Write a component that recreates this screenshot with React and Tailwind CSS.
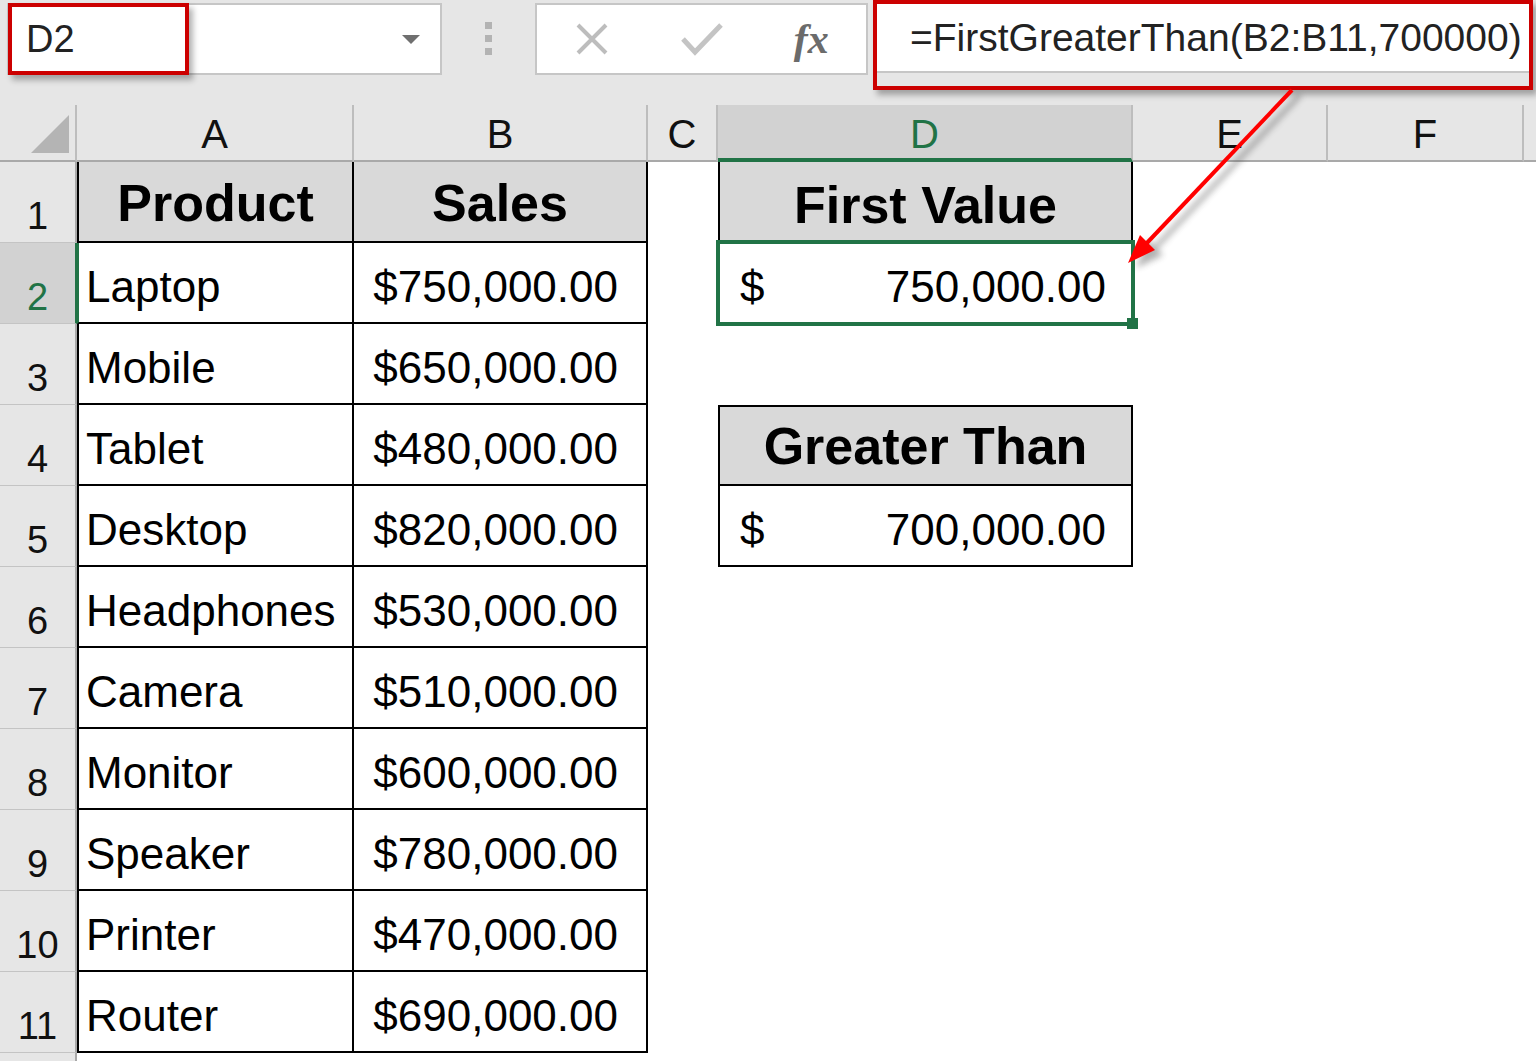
import React from "react";

const COLS = "grid grid-cols-[77px_277px_294px_70px_415px_195px_196px_12px]";

const data = [
  ["Laptop", "$750,000.00"],
  ["Mobile", "$650,000.00"],
  ["Tablet", "$480,000.00"],
  ["Desktop", "$820,000.00"],
  ["Headphones", "$530,000.00"],
  ["Camera", "$510,000.00"],
  ["Monitor", "$600,000.00"],
  ["Speaker", "$780,000.00"],
  ["Printer", "$470,000.00"],
  ["Router", "$690,000.00"],
];

function ColHead({ label, selected, last }) {
  if (selected) {
    return (
      <div className="h-[57px] bg-[#d2d2d2] border-r-2 border-[#bdbdbd] border-b-4 border-b-[#217346] flex items-end justify-center pb-[4px]">
        <span className="text-[40px] leading-none text-[#217346]">{label}</span>
      </div>
    );
  }
  return (
    <div className={"h-[57px] bg-[#e6e6e6] border-b-2 border-b-[#a9a9a9] flex items-end justify-center pb-[6px] " + (last ? "" : "border-r-2 border-r-[#bdbdbd]")}>
      <span className="text-[40px] leading-none text-[#111]">{label}</span>
    </div>
  );
}

function RowHead({ n, selected }) {
  if (selected) {
    return (
      <div className="h-[81px] bg-[#d2d2d2] border-r-2 border-r-[#217346] border-b border-b-[#c4c4c4] flex items-end justify-center pb-[7px]">
        <span className="text-[38px] leading-none text-[#217346]">{n}</span>
      </div>
    );
  }
  return (
    <div className="h-[81px] bg-[#e6e6e6] border-r-2 border-r-[#a9a9a9] border-b border-b-[#c4c4c4] flex items-end justify-center pb-[7px]">
      <span className="text-[38px] leading-none text-[#111]">{n}</span>
    </div>
  );
}

function DCell({ r }) {
  if (r === 1) {
    return (
      <div className="h-[81px] bg-[#d9d9d9] border-l-2 border-r-2 border-black flex items-end justify-center pb-[12px]">
        <span className="text-[52px] font-bold leading-none text-black">First Value</span>
      </div>
    );
  }
  if (r === 2) {
    return (
      <div className="h-[81px] bg-white border-l-2 border-r-2 border-b-2 border-black relative flex items-end justify-between pl-[20px] pr-[25px] pb-[13px]">
        <span className="text-[44px] leading-none text-black">$</span>
        <span className="text-[44px] leading-none text-black">750,000.00</span>
        <div className="absolute -left-[4px] -top-[3px] -right-[4px] -bottom-[4px] border-4 border-[#217346]"></div>
        <div className="absolute -right-[7px] -bottom-[7px] w-[11px] h-[11px] bg-[#217346]"></div>
      </div>
    );
  }
  if (r === 4) {
    return (
      <div className="h-[81px] bg-[#d9d9d9] border-2 border-black flex items-end justify-center pb-[12px]">
        <span className="text-[52px] font-bold leading-none text-black">Greater Than</span>
      </div>
    );
  }
  if (r === 5) {
    return (
      <div className="h-[81px] bg-white border-l-2 border-r-2 border-b-2 border-black flex items-end justify-between pl-[20px] pr-[25px] pb-[13px]">
        <span className="text-[44px] leading-none text-black">$</span>
        <span className="text-[44px] leading-none text-black">700,000.00</span>
      </div>
    );
  }
  return <div className="h-[81px] bg-white"></div>;
}

export default function App() {
  const rows = [];
  for (let r = 1; r <= 11; r++) {
    const isHead = r === 1;
    const d = data[r - 2];
    rows.push(
      <div key={r} className={COLS}>
        <RowHead n={r} selected={r === 2} />
        {isHead ? (
          <div className="h-[81px] bg-[#d9d9d9] border-l-2 border-r-2 border-b-2 border-black flex items-end justify-center pb-[12px]">
            <span className="text-[52px] font-bold leading-none text-black">Product</span>
          </div>
        ) : (
          <div className={"h-[81px] bg-white border-r-2 border-b-2 border-black flex items-end pl-[7px] pb-[13px] " + (r === 2 ? "border-l-2 border-l-[#217346]" : "border-l-2")}>
            <span className="text-[44px] leading-none text-black whitespace-nowrap">{d[0]}</span>
          </div>
        )}
        {isHead ? (
          <div className="h-[81px] bg-[#d9d9d9] border-r-2 border-b-2 border-black flex items-end justify-center pb-[12px]">
            <span className="text-[52px] font-bold leading-none text-black">Sales</span>
          </div>
        ) : (
          <div className="h-[81px] bg-white border-r-2 border-b-2 border-black flex items-end justify-end pr-[28px] pb-[13px]">
            <span className="text-[44px] leading-none text-black whitespace-nowrap">{d[1]}</span>
          </div>
        )}
        <div className="h-[81px] bg-white"></div>
        <DCell r={r} />
        <div className="h-[81px] bg-white"></div>
        <div className="h-[81px] bg-white"></div>
        <div className="h-[81px] bg-white"></div>
      </div>
    );
  }

  return (
    <div className="w-[1536px] h-[1061px] overflow-hidden relative bg-white font-['Liberation_Sans',Arial,sans-serif]">
      {/* Top bar */}
      <div className="h-[105px] bg-[#e6e6e6] flex items-start">
        <div className="mt-[3px] ml-[7px] w-[435px] h-[72px] bg-white border-2 border-[#c6c6c6] relative flex items-center justify-between pl-[17px] pr-[20px]">
          <span className="text-[38px] leading-none text-[#222]">D2</span>
          <svg width="18" height="9" viewBox="0 0 18 9">
            <polygon points="0,0 18,0 9,9" fill="#6f6f6f" />
          </svg>
          <div className="absolute -left-[1px] -top-[2px] w-[181px] h-[72px] border-4 border-[#cc0000] shadow-[4px_5px_6px_rgba(0,0,0,0.3)]"></div>
        </div>
        <div className="ml-[43px] mt-[22px] flex flex-col gap-[6px]">
          <div className="w-[7px] h-[7px] bg-[#b3b3b3]"></div>
          <div className="w-[7px] h-[7px] bg-[#b3b3b3]"></div>
          <div className="w-[7px] h-[7px] bg-[#b3b3b3]"></div>
        </div>
        <div className="ml-[43px] mt-[3px] w-[333px] h-[72px] bg-white border-2 border-[#c6c6c6] flex items-center">
          <div className="w-[110px] flex justify-center">
            <svg width="34" height="34" viewBox="0 0 34 34">
              <path d="M3 3 L31 31 M31 3 L3 31" stroke="#bdbdbd" strokeWidth="4" fill="none" />
            </svg>
          </div>
          <div className="w-[110px] flex justify-center">
            <svg width="44" height="34" viewBox="0 0 44 34">
              <path d="M3 17 L15 30 L41 3" stroke="#c4c4c4" strokeWidth="5" fill="none" />
            </svg>
          </div>
          <div className="w-[110px] flex justify-center">
            <span className="font-['Liberation_Serif',serif] italic font-bold text-[42px] leading-none text-[#6b6b6b]">fx</span>
          </div>
        </div>
        <div className="ml-[5px] w-[660px] h-[90px] border-4 border-[#cc0000] bg-[#e6e6e6] shadow-[4px_5px_6px_rgba(0,0,0,0.3)]">
          <div className="h-[69px] bg-white border-b-2 border-[#c6c6c6] flex items-center pl-[33px] overflow-hidden">
            <span className="text-[39px] leading-none text-[#222] whitespace-nowrap">=FirstGreaterThan(B2:B11,700000)</span>
          </div>
        </div>
      </div>

      {/* Column headers */}
      <div className={COLS}>
        <div className="h-[57px] bg-[#e6e6e6] border-r-2 border-r-[#bdbdbd] border-b-2 border-b-[#a9a9a9] flex items-end justify-end pr-[6px] pb-[7px]">
          <svg width="38" height="38" viewBox="0 0 38 38">
            <polygon points="38,0 38,38 0,38" fill="#b4b4b4" />
          </svg>
        </div>
        <ColHead label="A" />
        <ColHead label="B" />
        <ColHead label="C" />
        <ColHead label="D" selected />
        <ColHead label="E" />
        <ColHead label="F" />
        <ColHead label="" last />
      </div>

      {rows}

      <div className={COLS}>
        <div className="h-[20px] bg-[#e6e6e6] border-r-2 border-r-[#a9a9a9]"></div>
      </div>

      {/* Annotation arrow */}
      <svg className="absolute inset-0 pointer-events-none" width="1536" height="1061" viewBox="0 0 1536 1061">
        <defs>
          <filter id="blur" x="-20%" y="-20%" width="140%" height="140%">
            <feGaussianBlur stdDeviation="3" />
          </filter>
        </defs>
        <g filter="url(#blur)" opacity="0.45" transform="translate(8,5)">
          <line x1="1292" y1="90" x2="1145" y2="245" stroke="#555" strokeWidth="5" />
          <polygon points="1128,263 1155,250 1140,235" fill="#555" />
        </g>
        <line x1="1292" y1="90" x2="1145" y2="245" stroke="#ff0000" strokeWidth="4" />
        <polygon points="1128,263 1155,250 1140,235" fill="#ff0000" />
      </svg>
    </div>
  );
}
